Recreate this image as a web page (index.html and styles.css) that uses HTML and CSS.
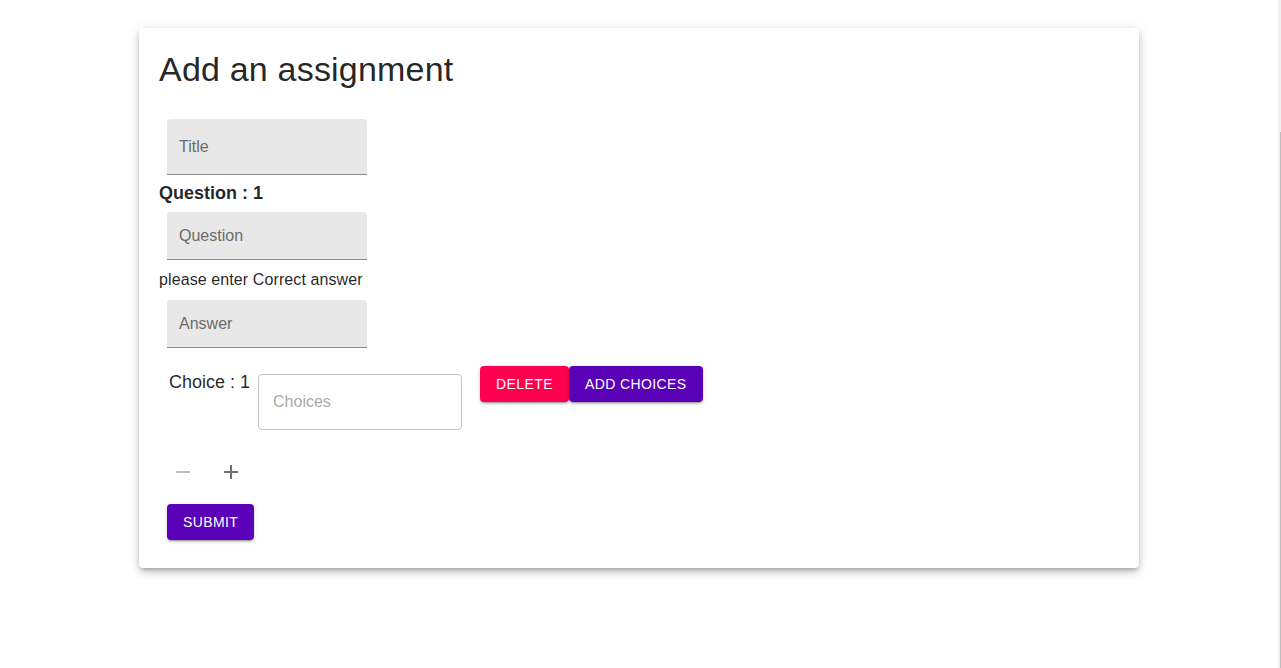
FILE: index.html
```html
<!DOCTYPE html>
<html lang="en">

<head>
    <meta charset="UTF-8">
    <meta name="viewport" content="width=device-width, initial-scale=1.0">
    <title>Add an assignment</title>
    <link rel="stylesheet" href="styles.css">
</head>

<body>
    <div class="paper">
        <h4 class="page_title">Add an assignment</h4>

        <div class="field field_tall">
            <span class="field_label">Title</span>
        </div>

        <div class="q_label">Question : 1</div>

        <div class="field">
            <span class="field_label">Question</span>
        </div>

        <div class="hint">please enter Correct answer</div>

        <div class="field">
            <span class="field_label">Answer</span>
        </div>

        <div class="choice_row">
            <span class="choice_label">Choice : 1</span>
            <div class="outlined">
                <span class="outlined_label">Choices</span>
            </div>
            <div class="btn_group">
                <a href="javascript:;" class="btn btn_red">Delete</a>
                <a href="javascript:;" class="btn btn_purple">Add choices</a>
            </div>
        </div>

        <!-- 减少 / 增加问题 -->
        <div class="icon_row">
            <span class="icon_btn disabled">
                <svg viewBox="0 0 24 24" width="24" height="24"><path d="M19 13H5v-2h14v2z"/></svg>
            </span>
            <span class="icon_btn">
                <svg viewBox="0 0 24 24" width="24" height="24"><path d="M19 13h-6v6h-2v-6H5v-2h6V5h2v6h6v2z"/></svg>
            </span>
        </div>

        <a href="javascript:;" class="btn btn_purple btn_submit">Submit</a>
    </div>

    <div class="scrollbar"></div>
</body>

</html>
```

FILE: styles.css
```css
* {
    margin: 0;
    padding: 0;
    box-sizing: border-box;
}

a {
    text-decoration: none;
}

body {
    min-height: 100vh;
    padding: 28px 0 0 139px;
    font-family: "Liberation Sans", Arial, sans-serif;
    color: rgba(0, 0, 0, .87);
    background-color: #fff;
}

.paper {
    display: flex;
    flex-direction: column;
    align-items: flex-start;
    width: 1000px;
    padding: 20px;
    border-radius: 4px;
    background-color: #fff;
    box-shadow: 0 3px 4px -2px rgba(0, 0, 0, .25), 0 5px 7px 0 rgba(0, 0, 0, .14), 0 1px 12px 0 rgba(0, 0, 0, .12);
}

.page_title {
    font-size: 34px;
    font-weight: 400;
    line-height: 42px;
    margin-bottom: 21px;
    letter-spacing: .2px;
}

.field {
    width: 200px;
    height: 48px;
    margin: 8px;
    padding-left: 12px;
    display: flex;
    align-items: center;
    background-color: #e8e8e8;
    border-radius: 4px 4px 0 0;
    border-bottom: 1px solid #8b8b8b;
}

.field_tall {
    height: 56px;
}

.field_label {
    font-size: 16px;
    color: #6b6b6b;
}

.q_label {
    font-size: 18px;
    font-weight: 700;
    line-height: 21px;
}

.hint {
    font-size: 16px;
    line-height: 24px;
    letter-spacing: .1px;
}

.choice_row {
    display: flex;
    align-items: flex-start;
    margin-top: 10px;
    padding-left: 10px;
}

.choice_label {
    font-size: 18px;
    line-height: 21px;
    margin-top: 6px;
}

.outlined {
    width: 204px;
    height: 56px;
    margin: 8px 18px 8px 8px;
    padding-left: 14px;
    display: flex;
    align-items: center;
    border: 1px solid #c4c4c4;
    border-radius: 4px;
}

.outlined_label {
    font-size: 16px;
    color: #a9a9a9;
}

.btn_group {
    display: flex;
}

.btn {
    display: inline-block;
    height: 36px;
    padding: 0 16px;
    line-height: 36px;
    font-size: 14px;
    letter-spacing: .4px;
    text-transform: uppercase;
    color: #fff;
    border-radius: 4px;
    box-shadow: 0 3px 1px -2px rgba(0, 0, 0, .2), 0 2px 2px 0 rgba(0, 0, 0, .14), 0 1px 5px 0 rgba(0, 0, 0, .12);
}

.btn_red {
    background-color: #ff004f;
}

.btn_purple {
    background-color: #5a00b6;
}

.icon_row {
    display: flex;
    gap: 8px;
    margin-top: 14px;
    padding-left: 4px;
}

.icon_btn {
    width: 40px;
    height: 40px;
    display: flex;
    align-items: center;
    justify-content: center;
    fill: #707070;
}

.icon_btn.disabled {
    fill: #bdbdbd;
}

.btn_submit {
    margin: 12px 0 8px 8px;
}

/* 右侧滚动条残影 */
.scrollbar {
    position: fixed;
    top: 0;
    right: 0;
    width: 3px;
    height: 100%;
    background-color: #f1f1f1;
}

.scrollbar:after {
    content: "";
    position: absolute;
    top: 132px;
    right: 0;
    width: 1px;
    bottom: 0;
    background-color: #bdbdbd;
}
```
